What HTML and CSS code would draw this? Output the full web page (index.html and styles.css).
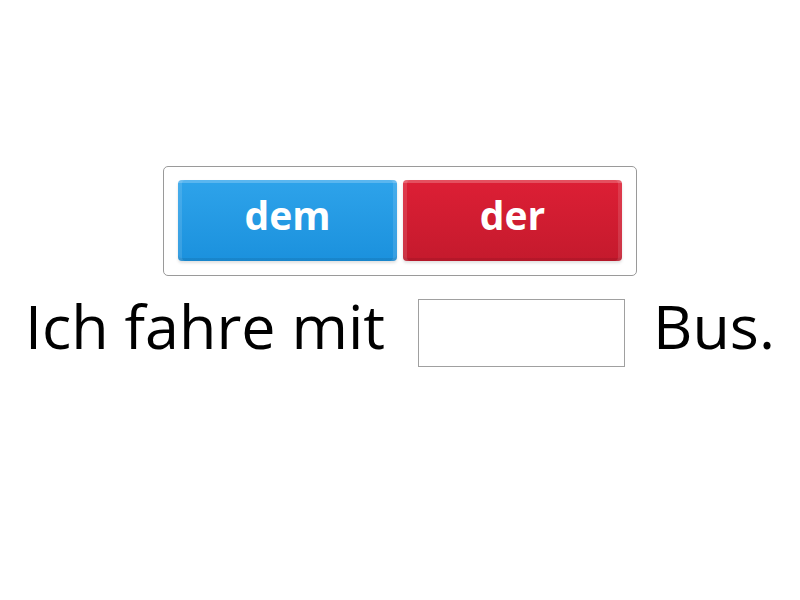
FILE: index.html
```html
<!DOCTYPE html>
<html lang="de">
<head>
<meta charset="utf-8">
<title>Lückentext</title>
<link rel="stylesheet" href="styles.css">
</head>
<body>
<main class="stage">
  <div class="options">
    <div class="tile tile-blue">dem</div>
    <div class="tile tile-red">der</div>
  </div>
  <div class="sentence">
    <span class="word">Ich fahre mit</span>
    <span class="gap"></span>
    <span class="word">Bus.</span>
  </div>
</main>
</body>
</html>
```
FILE: styles.css
```css
html, body {
  margin: 0;
  padding: 0;
  background: #fff;
}
body {
  font-family: "Open Sans", "Liberation Sans", sans-serif;
  width: 800px;
  height: 600px;
  overflow: hidden;
}
.stage {
  display: flex;
  flex-direction: column;
  align-items: center;
  padding-top: 166px;
}
.options {
  display: flex;
  gap: 6px;
  padding: 13px 14px 14px 14px;
  border: 1px solid #9a9a9a;
  border-radius: 5px;
}
.tile {
  width: 219px;
  height: 81px;
  border-radius: 4px;
  color: #fff;
  font-weight: 700;
  font-size: 39px;
  display: flex;
  align-items: center;
  justify-content: center;
  box-sizing: border-box;
  padding-bottom: 13px;
}
.tile-blue {
  background:
    linear-gradient(#5ab6ef, #5ab6ef) top / 100% 3px no-repeat,
    linear-gradient(#2ea3ea, #1b91dd);
  box-shadow: inset 4px 0 0 rgba(255,255,255,0.12), inset -4px 0 0 rgba(255,255,255,0.12), inset 0 -3px 0 rgba(0,0,0,0.08), 0 2px 3px rgba(0,0,0,0.12);
}
.tile-red {
  background:
    linear-gradient(#e4505f, #e4505f) top / 100% 3px no-repeat,
    linear-gradient(#dd1f35, #c41a2d);
  box-shadow: inset 4px 0 0 rgba(255,255,255,0.12), inset -4px 0 0 rgba(255,255,255,0.12), inset 0 -3px 0 rgba(0,0,0,0.08), 0 2px 3px rgba(0,0,0,0.12);
}
.sentence {
  display: flex;
  align-items: flex-start;
  margin-top: 23px;
  font-size: 61px;
  color: #000;
  line-height: 61px;
}
.word {
  margin-top: -4px;
}
.gap {
  width: 207px;
  height: 68px;
  box-sizing: border-box;
  border: 1px solid #a0a0a0;
  margin: 0 28px 0 33px;
}
```
